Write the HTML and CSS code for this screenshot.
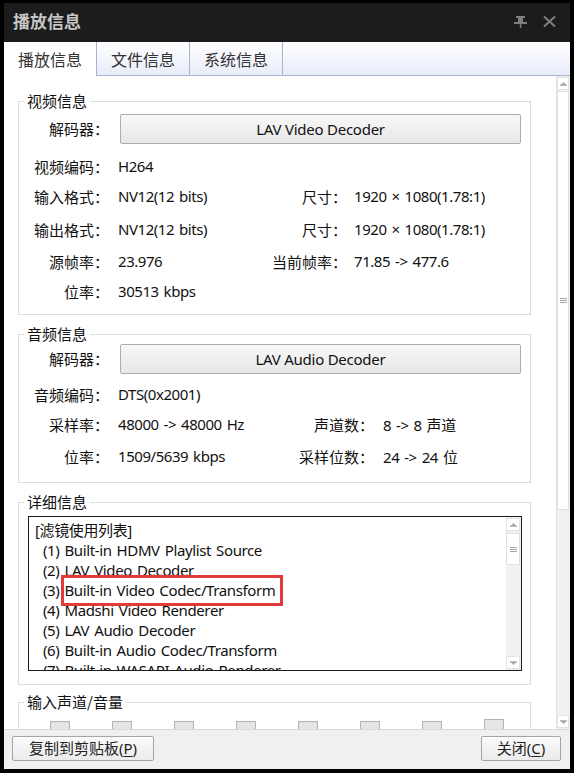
FILE: index.html
```html
<!DOCTYPE html>
<html lang="zh-CN">
<head>
<meta charset="utf-8">
<title>播放信息</title>
<link rel="stylesheet" href="styles.css">
</head>
<body>
<div class="window">
  <header class="titlebar">
    <span class="title">播放信息</span>
    <div class="tb-icons">
      <svg class="pin" width="13" height="12" viewBox="0 0 13 12" fill="#7f7f7f">
        <rect x="2" y="0" width="9" height="2"/>
        <rect x="4" y="2" width="5" height="4"/>
        <rect x="0" y="6" width="13" height="2"/>
        <rect x="5.8" y="8" width="1.5" height="4"/>
      </svg>
      <svg class="close" width="13" height="11" viewBox="0 0 13 11">
        <path d="M1 0.5 L12 10.5 M12 0.5 L1 10.5" stroke="#7f7f7f" stroke-width="2" fill="none"/>
      </svg>
    </div>
  </header>

  <nav class="tabs">
    <div class="tab active">播放信息</div>
    <div class="tab">文件信息</div>
    <div class="tab">系统信息</div>
  </nav>

  <main class="body">
    <div class="content">
      <fieldset class="grp g-video">
        <legend>视频信息</legend>
        <div class="inner">
          <div class="row btnrow"><span class="k">解码器：</span><button class="dec">LAV Video Decoder</button></div>
          <div class="row mt8"><span class="k">视频编码：</span><span class="v">H264</span></div>
          <div class="row"><span class="k">输入格式：</span><span class="v">NV12(12 bits)</span><span class="k2">尺寸：</span><span class="v">1920 × 1080(1.78:1)</span></div>
          <div class="row mt3"><span class="k">输出格式：</span><span class="v">NV12(12 bits)</span><span class="k2">尺寸：</span><span class="v">1920 × 1080(1.78:1)</span></div>
          <div class="row mt2"><span class="k">源帧率：</span><span class="v">23.976</span><span class="k2">当前帧率：</span><span class="v">71.85 -&gt; 477.6</span></div>
          <div class="row"><span class="k">位率：</span><span class="v">30513 kbps</span></div>
        </div>
      </fieldset>

      <fieldset class="grp g-audio">
        <legend>音频信息</legend>
        <div class="inner">
          <div class="row btnrow"><span class="k">解码器：</span><button class="dec">LAV Audio Decoder</button></div>
          <div class="row mt6"><span class="k">音频编码：</span><span class="v">DTS(0x2001)</span></div>
          <div class="row"><span class="k">采样率：</span><span class="v">48000 -&gt; 48000 Hz</span><span class="k2">声道数：</span><span class="v">8 -&gt; 8 声道</span></div>
          <div class="row mt2"><span class="k">位率：</span><span class="v">1509/5639 kbps</span><span class="k2">采样位数：</span><span class="v">24 -&gt; 24 位</span></div>
        </div>
      </fieldset>

      <fieldset class="grp g-detail">
        <legend>详细信息</legend>
        <div class="inner">
          <div class="listbox">
            <div class="list">
              <div>[滤镜使用列表]</div>
              <div class="it">(1) Built-in HDMV Playlist Source</div>
              <div class="it">(2) LAV Video Decoder</div>
              <div class="it">(3) <span class="hl">Built-in Video Codec/Transform</span></div>
              <div class="it">(4) Madshi Video Renderer</div>
              <div class="it">(5) LAV Audio Decoder</div>
              <div class="it">(6) Built-in Audio Codec/Transform</div>
              <div class="it">(7) Built-in WASAPI Audio Renderer</div>
            </div>
            <div class="sbar small">
              <div class="sb-arrow"><svg width="7" height="4" viewBox="0 0 7 4"><path d="M3.5 0 L6 2.6 H1 Z M0 2.6 H7 V3.8 H0 Z" fill="#a6a6a6"/></svg></div>
              <div class="sb-thumb small-thumb"><svg width="7" height="5" viewBox="0 0 7 5"><path d="M0 0.5 H7 M0 2.5 H7 M0 4.5 H7" stroke="#a6a6a6" stroke-width="1"/></svg></div>
              <div class="sb-track"></div>
              <div class="sb-arrow"><svg width="7" height="4" viewBox="0 0 7 4"><path d="M3.5 4 L6 1.4 H1 Z M0 0.2 H7 V1.4 H0 Z" fill="#a6a6a6"/></svg></div>
            </div>
          </div>
        </div>
      </fieldset>

      <fieldset class="grp g-vol">
        <legend>输入声道/音量</legend>
        <div class="meters">
          <div class="meter"></div>
          <div class="meter"></div>
          <div class="meter"></div>
          <div class="meter"></div>
          <div class="meter"></div>
          <div class="meter"></div>
          <div class="meter"></div>
          <div class="meter tall"></div>
        </div>
      </fieldset>
    </div>

    <div class="sbar main">
      <div class="sb-arrow"><svg width="7" height="4" viewBox="0 0 7 4"><path d="M3.5 0 L6 2.6 H1 Z M0 2.6 H7 V3.8 H0 Z" fill="#a6a6a6"/></svg></div>
      <div class="sb-thumb main-thumb"><svg width="7" height="5" viewBox="0 0 7 5"><path d="M0 0.5 H7 M0 2.5 H7 M0 4.5 H7" stroke="#a6a6a6" stroke-width="1"/></svg></div>
      <div class="sb-track"></div>
      <div class="sb-arrow"><svg width="7" height="4" viewBox="0 0 7 4"><path d="M3.5 4 L6 1.4 H1 Z M0 0.2 H7 V1.4 H0 Z" fill="#a6a6a6"/></svg></div>
    </div>
  </main>

  <footer class="footer">
    <button class="btn copy">复制到剪贴板(<u>P</u>)</button>
    <button class="btn closebtn">关闭(<u>C</u>)</button>
  </footer>
</div>
</body>
</html>
```

FILE: styles.css
```css
* { box-sizing: border-box; }

html, body {
  margin: 0;
  padding: 0;
  background: #000;
}

body {
  font-family: "Noto Sans", "Noto Sans CJK SC", sans-serif;
  font-size: 15px;
  color: #111;
}

.window {
  width: 566px;
  height: 766px;
  margin: 3px 4px 0 4px;
  background: #fff;
  display: flex;
  flex-direction: column;
  overflow: hidden;
}

/* ---------- title bar ---------- */
.titlebar {
  height: 39px;
  flex: none;
  background: #1c1c1c;
  display: flex;
  align-items: center;
  padding: 0 14px 4px 9px;
}

.title {
  flex: 1;
  font-family: "Noto Sans CJK SC", sans-serif;
  font-size: 17px;
  font-weight: 700;
  color: #c6c6c6;
  line-height: 1;
}

.tb-icons {
  display: flex;
  align-items: center;
  gap: 16px;
  margin-top: 2px;
}

/* ---------- tabs ---------- */
.tabs {
  height: 34px;
  flex: none;
  display: flex;
  background: linear-gradient(#ffffff, #e8ecf9);
  border-bottom: 1px solid #aab2d3;
}

.tab {
  width: 93px;
  border-right: 1px solid #aab2d3;
  display: flex;
  align-items: center;
  justify-content: center;
  font-family: "Noto Sans CJK SC", sans-serif;
  font-size: 16px;
  color: #333;
}

.tab.active {
  background: #fff;
  margin-bottom: -1px;
}

/* ---------- body ---------- */
.body {
  height: 653px;
  flex: none;
  display: flex;
}

.content {
  flex: 1;
  min-width: 0;
  padding: 16px 25px 0 14px;
  overflow: hidden;
}

.grp {
  border: 1px solid #dcdcdc;
  margin: 0;
  padding: 0;
  min-width: 0;
}

.grp legend {
  margin-left: 5px;
  padding: 0 3px;
  font-family: "Noto Sans CJK SC", sans-serif;
  font-size: 15px;
  line-height: 18px;
  color: #111;
}

.g-audio, .g-detail { margin-top: 10px; }
.g-vol { margin-top: 8px; }

.g-video .inner { padding: 4px 9px 7px 0; }
.g-audio .inner { padding: 1px 9px 10px 0; }

.row {
  display: grid;
  height: 30px;
  align-items: center;
  white-space: nowrap;
}

.g-video .row { grid-template-columns: 99px 140px 96px 1fr; }
.g-audio .row { grid-template-columns: 99px 161px 104px 1fr; }
.g-video .row.btnrow, .g-audio .row.btnrow { grid-template-columns: 99px 1fr; }

.mt2 { margin-top: 2px; }
.mt3 { margin-top: 3px; }
.mt6 { margin-top: 6px; }
.mt8 { margin-top: 8px; }

.k, .k2, .v { padding-bottom: 2px; }

.k {
  text-align: right;
  padding-right: 9px;
}

.k2 {
  text-align: right;
  padding-right: 7px;
}

.g-audio .k2 { padding-right: 9px; }

.v {
  letter-spacing: -0.45px;
  word-spacing: 1.5px;
}

.dec {
  width: 401px;
  height: 30px;
  margin: 0 0 0 2px;
  padding: 0;
  border: 1px solid #adadad;
  border-radius: 2px;
  background: linear-gradient(#f8f8f8, #e7e7e7);
  font: 15px "Noto Sans", "Noto Sans CJK SC", sans-serif;
  letter-spacing: -0.25px;
  color: #111;
}

/* ---------- detail list ---------- */
.g-detail .inner { padding: 5px 8px 13px 9px; }

.listbox {
  height: 155px;
  border: 1px solid #1b1b1b;
  display: flex;
  background: #fff;
}

.list {
  flex: 1;
  min-width: 0;
  padding: 3px 0 0 6px;
  line-height: 20px;
  overflow: hidden;
  white-space: nowrap;
  letter-spacing: -0.38px;
  word-spacing: 1.5px;
}

.list .it { padding-left: 8px; }

.hl {
  position: relative;
  display: inline-block;
}

.hl::after {
  content: "";
  position: absolute;
  left: -3px;
  right: -8px;
  top: -5px;
  bottom: -6px;
  border: 3px solid #e53a3a;
}

/* ---------- scrollbars ---------- */
.sbar {
  display: flex;
  flex-direction: column;
  flex: none;
  background: #f1f1f1;
}

.sbar.main {
  width: 14px;
  border-left: 1px solid #e2e2e2;
  padding: 1px 1px 1px 0;
}

.sbar.small {
  width: 15px;
  padding: 1px 1px 1px 0;
}

.sb-arrow {
  height: 13px;
  flex: none;
  background: #fff;
  border: 1px solid #e4e4e4;
  display: flex;
  align-items: center;
  justify-content: center;
}

.sb-thumb {
  flex: none;
  background: #fff;
  border: 1px solid #e0e0e0;
  display: flex;
  align-items: center;
  justify-content: center;
}

.main-thumb { height: 419px; margin-top: 1px; }
.small-thumb { height: 32px; margin-top: 2px; }

.sb-track { flex: 1; }

/* ---------- volume meters ---------- */
.meters {
  display: flex;
  align-items: flex-end;
  gap: 42px;
  padding: 8px 0 0 31px;
}

.meter {
  width: 20px;
  height: 40px;
  background: #e5e5e5;
  border: 1px solid #b3b3b3;
}

.meter.tall { height: 42px; }

/* ---------- footer ---------- */
.footer {
  height: 40px;
  flex: none;
  background: #f0f0f0;
  border-top: 1px solid #d9d9d9;
  display: flex;
  justify-content: space-between;
  align-items: flex-start;
  padding: 6px 9px 0 8px;
}

.btn {
  height: 25px;
  padding: 0;
  border: 1px solid #a5a5a5;
  border-radius: 2px;
  background: linear-gradient(#fbfbfb, #ebebeb);
  font: 15px "Noto Sans", "Noto Sans CJK SC", sans-serif;
  color: #222;
  line-height: 1;
}

.btn u { text-decoration-thickness: 1px; text-underline-offset: 2px; }

.copy { width: 142px; }
.closebtn { width: 80px; }
```
